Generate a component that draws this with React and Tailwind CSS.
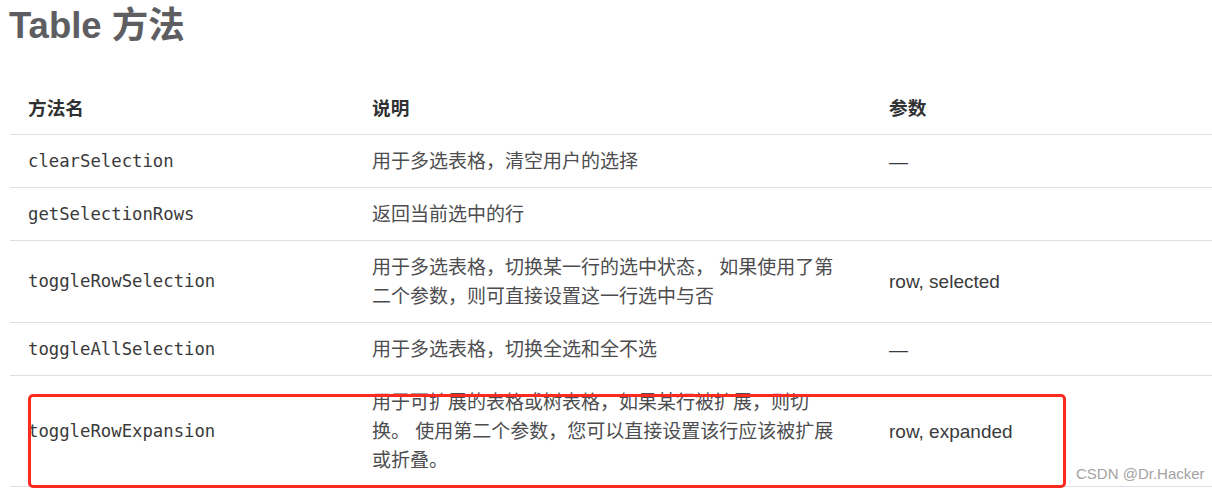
import React from "react";

const rows = [
  { name: "clearSelection", desc: "用于多选表格，清空用户的选择", param: "—" },
  { name: "getSelectionRows", desc: "返回当前选中的行", param: "" },
  {
    name: "toggleRowSelection",
    desc: "用于多选表格，切换某一行的选中状态， 如果使用了第二个参数，则可直接设置这一行选中与否",
    param: "row, selected",
  },
  { name: "toggleAllSelection", desc: "用于多选表格，切换全选和全不选", param: "—" },
  {
    name: "toggleRowExpansion",
    desc: "用于可扩展的表格或树表格，如果某行被扩展，则切换。 使用第二个参数，您可以直接设置该行应该被扩展或折叠。",
    param: "row, expanded",
  },
];

const sans = { fontFamily: '"Liberation Sans", Arial, "Noto Sans CJK SC", sans-serif' };
const mono = { fontFamily: '"DejaVu Sans Mono", "Liberation Mono", monospace' };

export default function App() {
  return (
    <div className="relative w-[1212px] h-[490px] bg-white overflow-hidden" style={sans}>
      <h2 className="pl-[9px] pt-[4px] text-[36.5px] leading-[44px] font-bold text-[#5e5e62]">
        Table 方法
      </h2>
      <table className="ml-[10px] mt-[34px] w-[1202px] table-fixed border-collapse">
        <colgroup>
          <col className="w-[344px]" />
          <col className="w-[517px]" />
          <col className="w-[341px]" />
        </colgroup>
        <thead>
          <tr className="border-b border-[#dcdfe6]">
            <th className="text-left font-bold text-[18.67px] leading-[29px] text-[#303133] px-[18px] py-[11.5px]">方法名</th>
            <th className="text-left font-bold text-[18.67px] leading-[29px] text-[#303133] px-[18px] py-[11.5px]">说明</th>
            <th className="text-left font-bold text-[18.67px] leading-[29px] text-[#303133] px-[18px] py-[11.5px]">参数</th>
          </tr>
        </thead>
        <tbody>
          {rows.map((r) => (
            <tr key={r.name} className="border-b border-[#dcdfe6]">
              <td className="px-[18px] py-[11.5px] align-middle text-[17.3px] leading-[29px] text-[#3a3a3a]" style={mono}>
                {r.name}
              </td>
              <td className="px-[18px] py-[11.5px] align-middle text-[19px] leading-[29px] text-[#4d4d4f]">
                <div className="max-w-[468px]">{r.desc}</div>
              </td>
              <td className="px-[18px] py-[11.5px] align-middle text-[19px] leading-[29px] text-[#3a3a3c]">
                {r.param}
              </td>
            </tr>
          ))}
        </tbody>
      </table>
      <div className="absolute left-[28px] top-[394px] w-[1038px] h-[94px] border-[3px] border-[#ff2a1f] rounded-[5px]" />
      <div className="absolute left-[1076px] top-[465px] text-[15px] leading-[18px] text-[#a3a3a3]">
        CSDN @Dr.Hacker
      </div>
    </div>
  );
}
